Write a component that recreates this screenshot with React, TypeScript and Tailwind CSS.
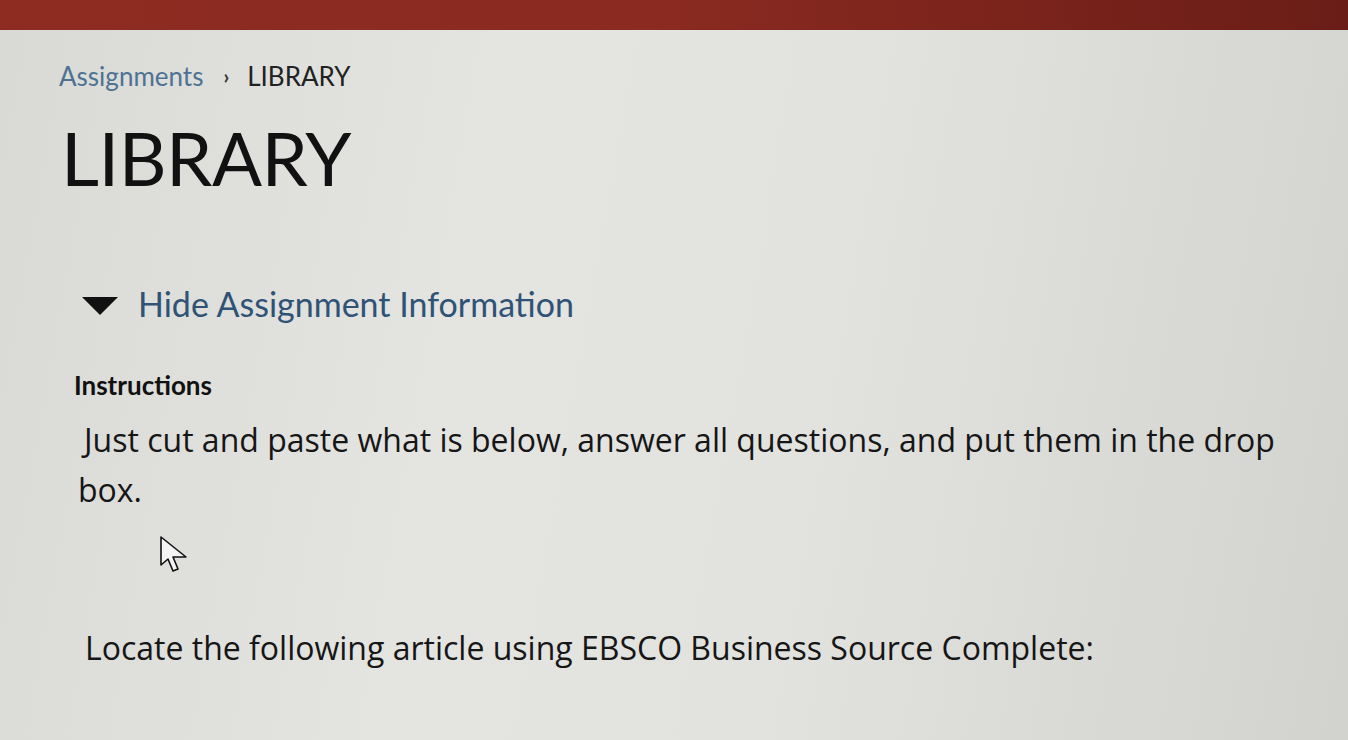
export default function App() {
    return (
        <div className="w-[1348px] h-[740px] overflow-hidden flex flex-col bg-[linear-gradient(100deg,#d9d9d5_0%,#e4e4e1_35%,#e2e2df_60%,#d2d2cf_100%)]">
            <div className="h-[30px] shrink-0 bg-[linear-gradient(90deg,#8e2c22_0%,#8a2a20_50%,#6a1d17_100%)]" />

            <div className="pl-[59px] pt-[30px] font-['Lato','Noto_Sans',sans-serif]">
                <nav className="flex items-center text-[26px] leading-[32px]">
                    <span className="text-[#4d7293]">Assignments</span>
                    <span className="ml-[20px] mr-[18px] text-[20px] font-bold text-[#333]">›</span>
                    <span className="text-[#222]">LIBRARY</span>
                </nav>

                <h1 className="mt-[21px] ml-[2px] text-[74px] leading-[90px] text-[#111] tracking-[-0.5px]">LIBRARY</h1>

                <button className="mt-[78px] ml-[23px] flex items-center gap-[20px] text-[34px] leading-[46px] text-[#2f5376]">
                    <svg width="36" height="19" viewBox="0 0 36 19" className="mt-[4px]">
                        <path d="M0 0 L36 0 L18 18 Z" fill="#111" />
                    </svg>
                    <span>Hide Assignment Information</span>
                </button>

                <div className="mt-[41px] ml-[15px] text-[26px] leading-[34px] font-bold text-[#111]">Instructions</div>
            </div>

            <div className="pl-[78px] font-['Open_Sans','Noto_Sans',sans-serif] text-[#161616]">
                <p className="mt-[13px] w-[1230px] text-[32px] leading-[50px]">
                    <span className="ml-[6px]">Just cut and paste what is below, answer all questions, and put them in the drop box.</span>
                </p>

                <div className="ml-[81px] mt-[20px] h-[40px]">
                    <svg width="32" height="40" viewBox="0 0 32 40">
                        <path d="M2 2 L2 30 L9 24 L14 36 L19 34 L14 22 L27 22 Z" fill="#f4f4f4" stroke="#111" strokeWidth="1.6" strokeLinejoin="round" />
                    </svg>
                </div>

                <p className="mt-[51px] ml-[7px] text-[32px] leading-[44px]">
                    Locate the following article using EBSCO Business Source Complete:
                </p>
            </div>
        </div>
    );
}
